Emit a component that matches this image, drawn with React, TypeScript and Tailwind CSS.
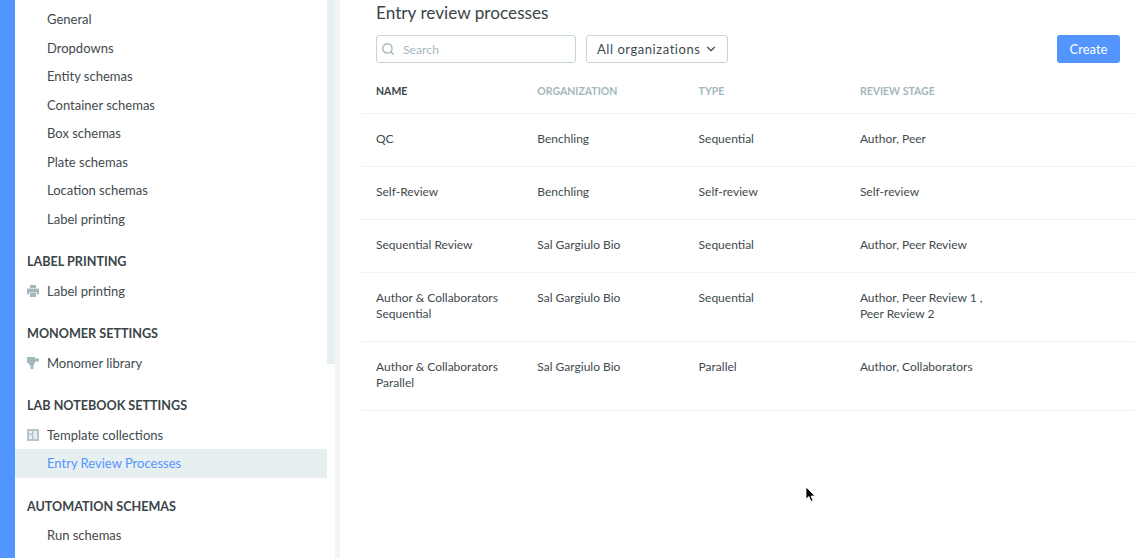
import { ChevronDown, Search } from "lucide-react";

const schemaLinks = [
  "General",
  "Dropdowns",
  "Entity schemas",
  "Container schemas",
  "Box schemas",
  "Plate schemas",
  "Location schemas",
  "Label printing",
];

const processes = [
  { name: ["QC"], org: "Benchling", type: "Sequential", stage: ["Author, Peer"] },
  { name: ["Self-Review"], org: "Benchling", type: "Self-review", stage: ["Self-review"] },
  { name: ["Sequential Review"], org: "Sal Gargiulo Bio", type: "Sequential", stage: ["Author, Peer Review"] },
  {
    name: ["Author & Collaborators", "Sequential"],
    org: "Sal Gargiulo Bio",
    type: "Sequential",
    stage: ["Author, Peer Review 1 ,", "Peer Review 2"],
  },
  {
    name: ["Author & Collaborators", "Parallel"],
    org: "Sal Gargiulo Bio",
    type: "Parallel",
    stage: ["Author, Collaborators"],
  },
];

function PrinterIcon() {
  return (
    <svg viewBox="0 0 12 12" className="h-[12px] w-[12px] fill-[#a3b8bd]">
      <path d="M3 0h6v3H3z" />
      <path d="M0 3.500h12v6h-2V7.500H2v2H0z" />
      <path d="M3 8h6v4H3z" />
    </svg>
  );
}

function MonomerIcon() {
  return (
    <svg viewBox="0 0 12 12" className="h-[12px] w-[12px] fill-[#a3b8bd]">
      <path d="M0 0h8v1.500h4v3H8V6H7v2H6.500v4h-3V8H2V6H0z" />
    </svg>
  );
}

function TemplateIcon() {
  return (
    <svg viewBox="0 0 12 12" className="h-[12px] w-[12px]">
      <path d="M0 0h12v12H0z" fill="#b4c6ca" />
      <path d="M2 2h3v2.500H2zM6.500 2h3.500v8H6.500z" fill="#e6eef0" />
      <path d="M2 6h3v4H2z" fill="#e6eef0" />
    </svg>
  );
}

function NavRow({ label, icon, active }: { label: string; icon?: React.ReactNode; active?: boolean }) {
  return (
    <div
      className={`flex h-[28.5px] items-center text-[13px] ${
        active ? "bg-[#e8eff1] text-[#5295ff]" : "pt-[1px] text-[#3f4a4e]"
      }`}
    >
      <span className="flex w-[32px] shrink-0 justify-end pr-[8px]">{icon}</span>
      {label}
    </div>
  );
}

function NavHeader({ label }: { label: string }) {
  return (
    <div className="flex h-[43.5px] items-end pb-[6.5px] pl-[12px] text-[12.6px] leading-[16px] font-bold text-[#3a4549]">
      {label}
    </div>
  );
}

export default function App() {
  return (
    <div
      className="relative flex h-[558px] w-[1135px] overflow-hidden bg-white text-[#3f4a4e]"
      style={{ fontFamily: "Lato, 'Open Sans', sans-serif" }}
    >
      <div className="w-[15px] shrink-0 bg-[#5295ff]" />

      {/* Settings nav */}
      <div className="w-[312px] shrink-0 pt-[5px]">
        {schemaLinks.map((link) => (
          <NavRow key={link} label={link} />
        ))}
        <NavHeader label="LABEL PRINTING" />
        <NavRow label="Label printing" icon={<PrinterIcon />} />
        <NavHeader label="MONOMER SETTINGS" />
        <NavRow label="Monomer library" icon={<MonomerIcon />} />
        <NavHeader label="LAB NOTEBOOK SETTINGS" />
        <NavRow label="Template collections" icon={<TemplateIcon />} />
        <NavRow label="Entry Review Processes" active />
        <NavHeader label="AUTOMATION SCHEMAS" />
        <NavRow label="Run schemas" />
      </div>

      {/* Scrollbar */}
      <div className="w-[8px] shrink-0">
        <div className="h-[364px] bg-[#e8eff1]" />
      </div>
      <div className="w-[5px] shrink-0 bg-[#f1f5f6]" />

      {/* Main panel */}
      <div className="min-w-0 flex-1 pl-[21px]">
        <div className="pl-[15px]">
          <h1 className="pt-[2px] pb-[1px] text-[17.2px] leading-[21px] font-normal text-[#3a4549]">Entry review processes</h1>
          <div className="mt-[11px] flex h-[28px] pr-[15px]">
            <div className="flex w-[200px] items-center rounded-[3px] border border-[#c5d4d8] pl-[4px]">
              <Search className="h-[14px] w-[14px] text-[#a3b8bd]" strokeWidth={2.4} />
              <span className="ml-[8px] pt-[1px] text-[12px] tracking-[0.1px] text-[#a3b8bd]">Search</span>
            </div>
            <div className="ml-[10px] flex w-[142px] items-center rounded-[3px] border border-[#c5d4d8] pl-[10px] text-[13px] tracking-[0.55px] text-[#3f4a4e]">
              <span className="pt-[1px]">All organizations</span>
              <ChevronDown className="ml-[4px] h-[14px] w-[14px]" strokeWidth={2} />
            </div>
            <button className="ml-auto w-[63px] rounded-[3px] bg-[#5295ff] pt-[1px] text-[13px] text-white">Create</button>
          </div>
        </div>

        <div className="flex h-[51px] items-start border-b border-[#eef2f3] pt-[20px] pl-[15px] text-[10.5px] leading-[16px] font-bold">
          <div className="w-[161.3px] text-[#3a4549]">NAME</div>
          <div className="w-[161.3px] text-[#a3b8bd]">ORGANIZATION</div>
          <div className="w-[161.3px] text-[#a3b8bd]">TYPE</div>
          <div className="w-[161.3px] text-[#a3b8bd]">REVIEW STAGE</div>
        </div>

        {processes.map((p) => (
          <div
            key={p.name.join(" ")}
            className="flex border-b border-[#eef2f3] pt-[17px] pb-[19px] pl-[15px] text-[12px] leading-[16px]"
          >
            <div className="w-[161.3px]">
              {p.name.map((line) => (
                <div key={line}>{line}</div>
              ))}
            </div>
            <div className="w-[161.3px]">{p.org}</div>
            <div className="w-[161.3px]">{p.type}</div>
            <div className="w-[161.3px]">
              {p.stage.map((line) => (
                <div key={line}>{line}</div>
              ))}
            </div>
          </div>
        ))}
      </div>

      {/* Mouse cursor */}
      <svg viewBox="0 0 12 17" className="absolute top-[486px] left-[805px] h-[17px] w-[12px]">
        <path d="M1 1v12l3-2.500 2 5 2-1-2-4.500h4z" fill="#000" stroke="#fff" strokeWidth="0.8" />
      </svg>
    </div>
  );
}
